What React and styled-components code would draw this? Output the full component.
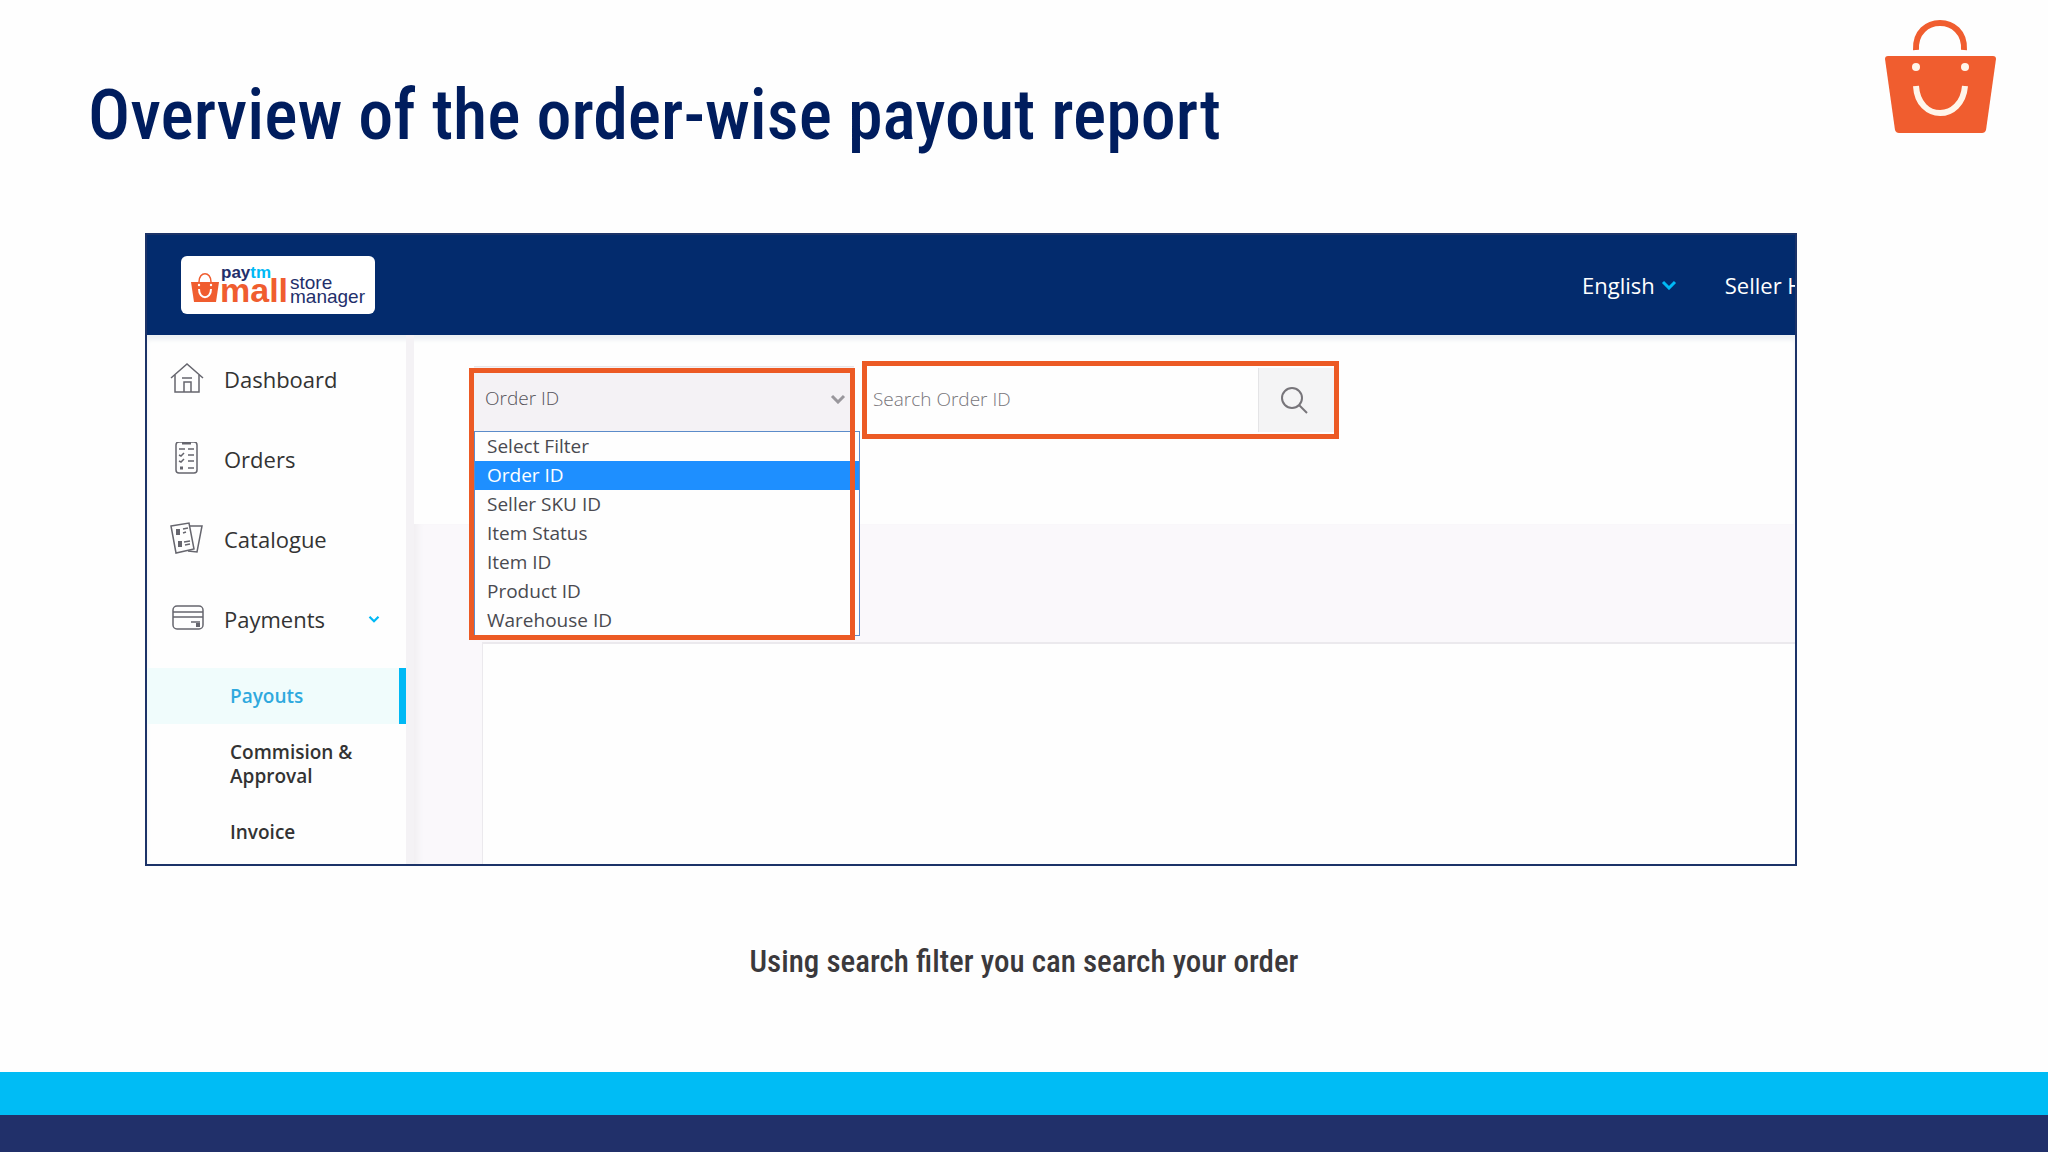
import React from "react";
import styled, { createGlobalStyle } from "styled-components";

const FILTERS = [
  "Select Filter",
  "Order ID",
  "Seller SKU ID",
  "Item Status",
  "Item ID",
  "Product ID",
  "Warehouse ID",
];

const HomeIcon = () => (
  <NavSvg viewBox="0 0 34 34">
    <path d="M1 16 L17 2 L33 16" />
    <path d="M5 13 V30 H29 V13" />
    <path d="M14 30 V20 H21 V30 M12 16 H22" />
  </NavSvg>
);

const OrdersIcon = () => (
  <NavSvg viewBox="0 1 34 34">
    <rect x="6" y="1" width="21" height="31" rx="3" />
    <path d="M12 2 H21" strokeWidth="3" />
    <path d="M9 8 H15 M18 8 H24 M9 14 L11 15 L14 12 M18 14 H24 M9 20 L11 21 L14 18 M18 20 H24 M18 27 H24" />
    <path d="M10 27 H13" strokeWidth="3" />
  </NavSvg>
);

const CatalogueIcon = () => (
  <NavSvg viewBox="0 0 34 34">
    <path d="M1 4 L19 1 L24 27 L6 31 Z" />
    <path d="M20 4 L32 4 L27 30 L18 29" />
    <path d="M6 10 H10 M8 22 H12" strokeWidth="6" />
    <path d="M13 7 L18 6 M13 11 L16 10 M14 20 L20 19 M15 23 L20 22" />
  </NavSvg>
);

const CardIcon = () => (
  <NavSvg viewBox="-1 0 34 34">
    <rect x="2" y="4" width="30" height="23" rx="4" />
    <path d="M2 10 H32 M2 15 H32" />
    <path d="M20 20 H29" />
    <path d="M25 23 H29" strokeWidth="4" />
  </NavSvg>
);

const Chevron = () => (
  <ChevronSvg viewBox="0 0 16 10" aria-hidden="true">
    <path d="M2 2 L8 8 L14 2" />
  </ChevronSvg>
);

const Bag = () => (
  <BagSvg viewBox="0 0 114 116" role="img" aria-label="Shopping bag">
    <path d="M32 32 C30 -4 82 -4 80 32" fill="none" stroke="#f05d2f" strokeWidth="6" />
    <path
      d="M4 38 H109 Q112 38 112 41 L102 112 Q101 115 98 115 H15 Q12 115 11 112 L1 41 Q1 38 4 38 Z"
      fill="#f05d2f"
    />
    <circle cx="32" cy="49" r="4" fill="#fff6ea" />
    <circle cx="81" cy="49" r="4" fill="#fff6ea" />
    <path d="M32 68 C34 104 78 104 81 68" fill="none" stroke="#fff6ea" strokeWidth="6" />
  </BagSvg>
);

const MallLogo = () => (
  <LogoSvg viewBox="0 0 194 58" role="img" aria-label="Paytm Mall Store Manager">
    <path d="M18 26 C18 15 30 15 30 26" fill="none" stroke="#f05d2f" strokeWidth="1.5" />
    <path d="M10 26 H38 L35 46 H13 Z" fill="#f05d2f" />
    <path d="M18 33 C18 44 30 44 30 33" fill="none" stroke="#fff" strokeWidth="2" />
    <circle cx="18" cy="29" r="1.2" fill="#fff" />
    <circle cx="30" cy="29" r="1.2" fill="#fff" />
    <LogoText x="40" y="22" $size={17} $color="#232f6b">
      pay<tspan fill="#00b9f5">tm</tspan>
    </LogoText>
    <LogoText x="39" y="46" $size={34} $color="#f05d2f">mall</LogoText>
    <LogoText x="109" y="33" $size={19} $weight={400} $color="#232f6b">store</LogoText>
    <LogoText x="109" y="47" $size={19} $weight={400} $color="#232f6b">manager</LogoText>
  </LogoSvg>
);

const App = () => (
  <>
    <GlobalStyles />
    <Slide>
      <SlideHeader>
        <Title>Overview of the order-wise payout report</Title>
        <Bag />
      </SlideHeader>

      <Frame>
        <TopBar>
          <MallLogo />
          <TopLinks>
            <LanguageButton type="button">
              English <Chevron />
            </LanguageButton>
            <TopLink href="#help">Seller Help</TopLink>
          </TopLinks>
        </TopBar>

        <Body>
          <Sidebar aria-label="Main">
            <NavItem href="#dashboard"><HomeIcon />Dashboard</NavItem>
            <NavItem href="#orders"><OrdersIcon />Orders</NavItem>
            <NavItem href="#catalogue"><CatalogueIcon />Catalogue</NavItem>
            <NavItem href="#payments"><CardIcon />Payments<Chevron /></NavItem>
            <SubNav>
              <SubItem href="#payouts" $active>Payouts</SubItem>
              <SubItem href="#commission">Commision &amp; Approval</SubItem>
              <SubItem href="#invoice">Invoice</SubItem>
            </SubNav>
          </Sidebar>

          <Main>
            <Toolbar>
              <FilterField>
                <FilterSelect aria-label="Filter" defaultValue="Order ID">
                  {FILTERS.map((name) => (
                    <option key={name}>{name}</option>
                  ))}
                </FilterSelect>
                <Chevron />
                <Menu role="listbox" aria-label="Filter options">
                  {FILTERS.map((name) => (
                    <MenuItem
                      key={name}
                      role="option"
                      aria-selected={name === "Order ID"}
                      $selected={name === "Order ID"}
                    >
                      {name}
                    </MenuItem>
                  ))}
                </Menu>
                <FilterOutline />
              </FilterField>
              <SearchField>
                <SearchInput type="text" placeholder="Search Order ID" aria-label="Search Order ID" />
                <SearchButton type="button" aria-label="Search">
                  <svg viewBox="0 0 28 28" width="28" height="28">
                    <circle cx="11" cy="12" r="10" />
                    <path d="M18 19 L26 27" />
                  </svg>
                </SearchButton>
              </SearchField>
            </Toolbar>
            <Content>
              <Panel />
            </Content>
          </Main>
        </Body>
      </Frame>

      <Caption>Using search filter you can search your order</Caption>
      <Stripes />
    </Slide>
  </>
);

const GlobalStyles = createGlobalStyle`
  *, *::before, *::after {
    box-sizing: border-box;
  }

  body {
    margin: 0;
    background: #fefefe;
    font-family: "Open Sans", sans-serif;
  }
`;

const Slide = styled.main`
  display: flex;
  flex-direction: column;
  min-height: 100vh;
`;

const SlideHeader = styled.header`
  display: flex;
  justify-content: space-between;
  align-items: flex-start;
  padding: 18px 50px 0 88px;
`;

const Title = styled.h1`
  margin: 57px 0 0;
  color: #001d5e;
  font-family: "Roboto Condensed", "Liberation Sans Narrow", "Liberation Sans", sans-serif;
  font-size: 70px;
  font-weight: 500;
  line-height: 80px;
`;

const BagSvg = styled.svg`
  width: 114px;
  height: 116px;
  flex: none;
`;

const Frame = styled.section`
  display: flex;
  flex-direction: column;
  margin: 78px 251px 0 145px;
  border: 2px solid #1c3368;
  background: #fefefe;
  overflow: hidden;
`;

const TopBar = styled.div`
  display: flex;
  align-items: center;
  justify-content: space-between;
  height: 100px;
  padding-left: 34px;
  background: #032b6d;
`;

const LogoSvg = styled.svg`
  width: 194px;
  height: 58px;
  border-radius: 6px;
  background: #fff;
`;

const LogoText = styled.text`
  font-family: "Liberation Sans", sans-serif;
  font-size: ${(p) => p.$size}px;
  font-weight: ${(p) => p.$weight || 700};
  fill: ${(p) => p.$color};
`;

const TopLinks = styled.div`
  display: flex;
  align-items: center;
  gap: 48px;
  width: 213px;
  white-space: nowrap;
`;

const ChevronSvg = styled.svg`
  width: 16px;
  height: 10px;
  flex: none;
  fill: none;
  stroke: #00b9f5;
  stroke-width: 3;
`;

const LanguageButton = styled.button`
  display: flex;
  align-items: center;
  gap: 6px;
  padding: 0;
  border: 0;
  background: none;
  color: #fff;
  font: 400 22px/32px "Open Sans", sans-serif;
`;

const TopLink = styled.a`
  color: #fff;
  font-size: 22px;
  line-height: 32px;
  text-decoration: none;
`;

const Body = styled.div`
  display: flex;
  height: 529px;
  box-shadow: inset 0 5px 4px #edf1f4;
`;

const Sidebar = styled.nav`
  display: flex;
  flex-direction: column;
  flex: none;
  width: 267px;
  padding-top: 4px;
  border-right: 8px solid #f4f2f5;
`;

const NavItem = styled.a`
  display: flex;
  align-items: center;
  height: 80px;
  padding: 0 26px 0 23px;
  color: #333;
  font-size: 22px;
  line-height: 32px;
  text-decoration: none;

  ${ChevronSvg} {
    width: 12px;
    margin-left: auto;
  }
`;

const NavSvg = styled.svg`
  width: 34px;
  height: 34px;
  margin-right: 20px;
  fill: none;
  stroke: #66666e;
  stroke-width: 1.5;
`;

const SubNav = styled.div`
  display: flex;
  flex-direction: column;
  margin-top: 9px;
`;

const SubItem = styled.a`
  padding: 16px 32px 16px 83px;
  border-right: 7px solid ${(p) => (p.$active ? "#00b9f5" : "transparent")};
  background: ${(p) => (p.$active ? "#f0fcfc" : "transparent")};
  color: ${(p) => (p.$active ? "#2fa9de" : "#333")};
  font-size: 19px;
  font-weight: 600;
  line-height: 24px;
  text-decoration: none;
`;

const Main = styled.div`
  display: flex;
  flex-direction: column;
  flex: 1;
  min-width: 0;
`;

const Toolbar = styled.div`
  display: flex;
  align-items: flex-start;
  gap: 3px;
  height: 189px;
  padding: 26px 0 0 55px;
`;

const FilterField = styled.div`
  position: relative;
  display: flex;
  align-items: center;
  width: 390px;
  height: 70px;
  padding: 5px 5px 0;

  > ${ChevronSvg} {
    position: absolute;
    right: 13px;
    stroke: #99979c;
  }
`;

const FilterSelect = styled.select`
  width: 100%;
  height: 65px;
  padding: 0 11px 2px;
  appearance: none;
  border: 0;
  border-top: 1px solid #e8e6e9;
  border-radius: 0;
  background: #f4f2f5;
  color: #55535a;
  font: 300 19px/24px "Open Sans", sans-serif;
`;

const Menu = styled.ul`
  position: absolute;
  top: 70px;
  left: 5px;
  width: 386px;
  margin: 0;
  padding: 0;
  border: 1px solid #5b8bc9;
  background: #fefefe;
  list-style: none;
`;

const MenuItem = styled.li`
  padding-left: 12px;
  background: ${(p) => (p.$selected ? "#1e8fff" : "transparent")};
  color: ${(p) => (p.$selected ? "#fff" : "#4a4a50")};
  font-size: 19px;
  line-height: 29px;
`;

const FilterOutline = styled.div`
  position: absolute;
  top: 7px;
  left: 0;
  width: 386px;
  height: 272px;
  border: 5px solid #ec5a24;
  pointer-events: none;
`;

const SearchField = styled.div`
  display: flex;
  width: 477px;
  height: 78px;
  border: 5px solid #ec5a24;
`;

const SearchInput = styled.input`
  flex: 1;
  min-width: 0;
  padding: 0 6px 2px;
  border: 0;
  background: #fefefe;
  font: 300 19px/24px "Open Sans", sans-serif;

  &::placeholder {
    color: #77757a;
    opacity: 1;
  }
`;

const SearchButton = styled.button`
  display: flex;
  align-items: center;
  justify-content: center;
  width: 76px;
  margin: 2px 0;
  padding: 0 4px 0 0;
  border: 0;
  border-left: 1px solid #e4e4e6;
  background: #f4f4f5;

  svg {
    fill: none;
    stroke: #77757a;
    stroke-width: 2;
  }
`;

const Content = styled.div`
  display: flex;
  flex: 1;
  padding: 118px 0 0 68px;
  background: #faf8fb;
  box-shadow: inset 8px 0 6px -4px #f1eff2;
`;

const Panel = styled.div`
  flex: 1;
  border: solid #ebe9ed;
  border-width: 2px 0 0 1px;
  background: #fefefe;
`;

const Caption = styled.p`
  margin: 76px 0 0;
  color: #3b393c;
  font-family: "Roboto Condensed", "Liberation Sans Narrow", "Liberation Sans", sans-serif;
  font-size: 31px;
  font-weight: 500;
  line-height: 40px;
  text-align: center;
`;

const Stripes = styled.footer`
  height: 80px;
  margin-top: auto;
  border-top: 43px solid #00bcf5;
  background: #21306a;
`;

export default App;
